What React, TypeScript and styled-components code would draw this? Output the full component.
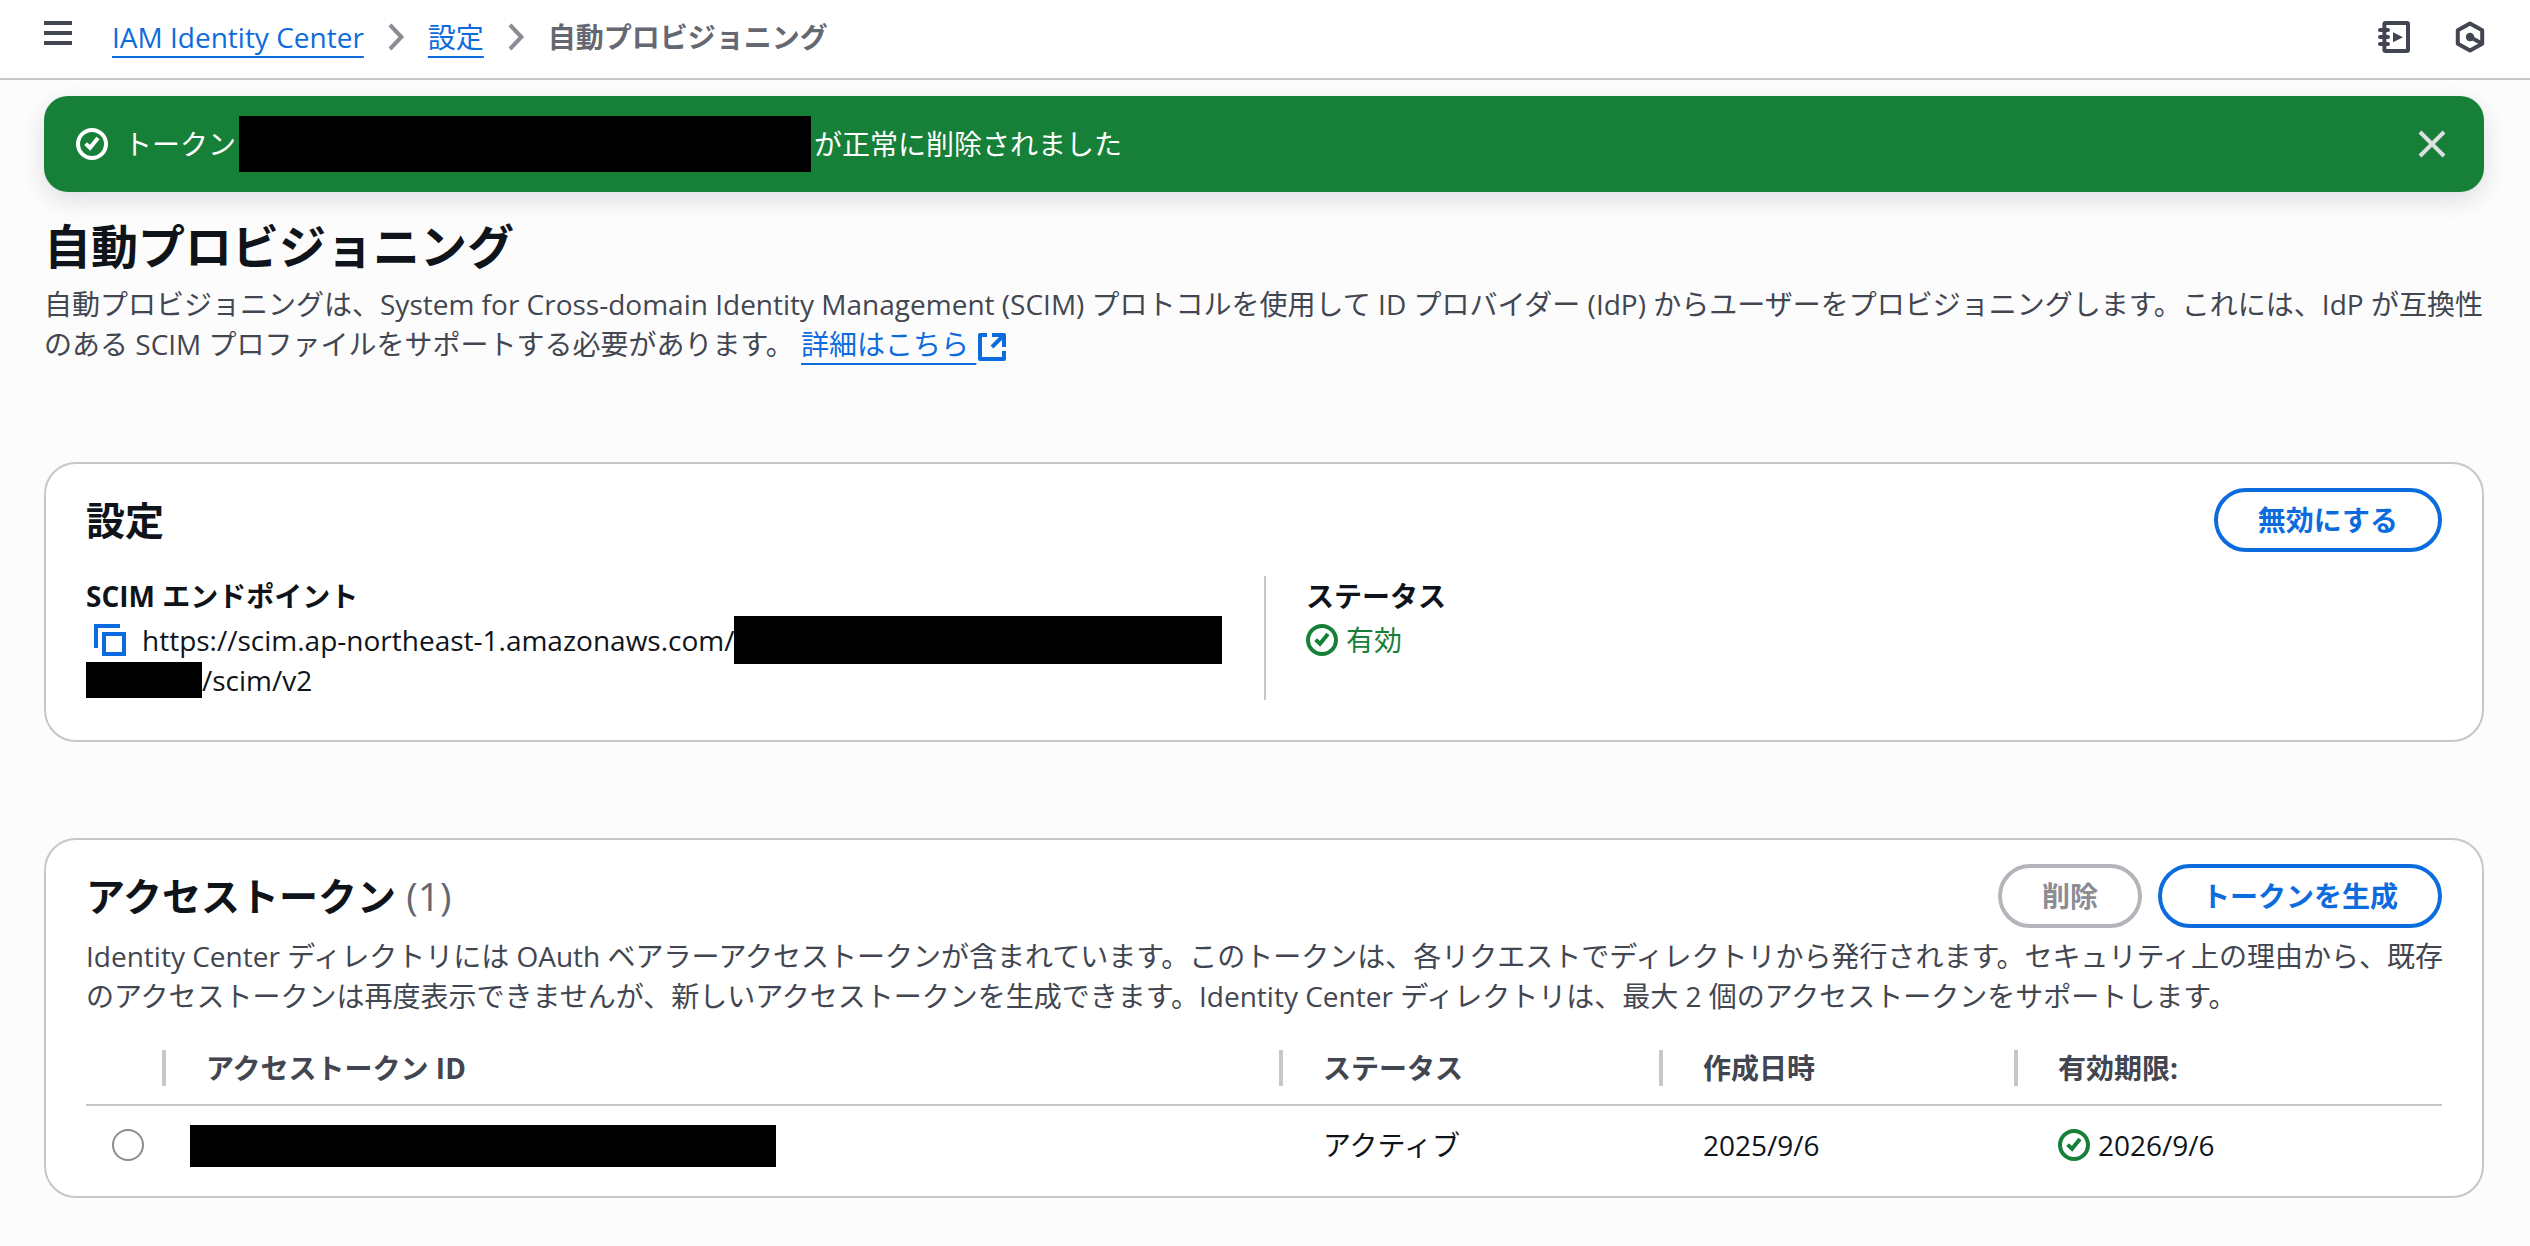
import React from "react";
import styled, { createGlobalStyle, css } from "styled-components";

const color = {
  text: "#0f141a",
  body: "#424650",
  muted: "#656871",
  line: "#c6c6cd",
  link: "#0d6cdd",
  success: "#178038",
  disabled: "#8c8c94",
};

const GlobalStyle = createGlobalStyle`
  *, *::before, *::after { box-sizing: border-box; }
  body {
    margin: 0;
    background: #fcfcfd;
    color: ${color.text};
    font-family: "Open Sans", "Noto Sans CJK JP", sans-serif;
    font-size: 28px;
    line-height: 40px;
  }
  h1, h2, h3, p, dl, dd, dt, ol { margin: 0; padding: 0; }
`;

const Icon = styled.svg`
  width: 32px;
  height: 32px;
  fill: none;
  stroke: currentColor;
  stroke-width: 2;
  flex: none;
`;

const IconButton = styled.button`
  display: flex;
  padding: 0;
  border: 0;
  background: none;
  color: inherit;
  cursor: pointer;
`;

const Link = styled.a`
  color: ${color.link};
  text-decoration: underline;
  text-decoration-thickness: 2px;
  text-underline-offset: 8px;
  text-decoration-skip-ink: none;
`;

const TopBar = styled.header`
  display: flex;
  align-items: center;
  justify-content: space-between;
  height: 80px;
  padding: 0 44px 4px;
  background: #fff;
  border-bottom: 2px solid ${color.line};
  color: ${color.body};
`;

const TopGroup = styled.div<{ $gap: number }>`
  display: flex;
  align-items: center;
  gap: ${(p) => p.$gap}px;
`;

const Crumbs = styled.ol`
  display: flex;
  align-items: center;
  gap: 16px;
  list-style: none;
`;

const Crumb = styled.li<{ $current?: boolean }>`
  display: flex;
  align-items: center;
  gap: 16px;
  font-weight: ${(p) => (p.$current ? 700 : 400)};
  color: ${(p) => (p.$current ? color.muted : color.link)};
`;

const Separator = styled(Icon)`
  color: ${color.disabled};
`;

const Content = styled.main`
  padding: 16px 46px 48px 44px;
`;

const Flash = styled.div`
  display: flex;
  align-items: center;
  gap: 16px;
  min-height: 96px;
  padding: 0 36px 0 32px;
  border-radius: 24px;
  background: ${color.success};
  color: #fff;
  box-shadow: 0 8px 24px rgba(0, 7, 22, 0.12);
`;

const FlashText = styled.div`
  display: flex;
  align-items: center;
  gap: 3px;
  flex: 1;
`;

const CloseButton = styled(IconButton)`
  color: #dedee3;
`;

const Redacted = styled.span<{ $width: number; $height: number; $grow?: boolean }>`
  display: inline-block;
  flex: ${(p) => (p.$grow ? "1 1 0" : "none")};
  width: ${(p) => p.$width}px;
  height: ${(p) => p.$height}px;
  background: #000;
  vertical-align: middle;
`;

const PageHeader = styled.div`
  padding-top: 24px;
  color: ${color.body};
`;

const Title = styled.h1`
  margin-bottom: 8px;
  font-size: 47px;
  line-height: 60px;
  font-weight: 700;
  color: ${color.text};
`;

const ExternalIcon = styled(Icon)`
  width: 28px;
  height: 28px;
  margin-left: 2px;
  vertical-align: -6px;
`;

const Card = styled.section<{ $top: number; $bottom: number }>`
  margin-top: ${(p) => p.$top}px;
  padding: 24px 40px ${(p) => p.$bottom}px;
  border: 2px solid ${color.line};
  border-radius: 32px;
  background: #fff;
`;

const CardHeader = styled.div`
  display: flex;
  align-items: center;
  justify-content: space-between;
`;

const CardTitle = styled.h2`
  font-size: 39px;
  line-height: 48px;
  font-weight: 700;
`;

const Counter = styled.span`
  font-weight: 500;
  color: ${color.muted};
`;

const Actions = styled.div`
  display: flex;
  gap: 16px;
`;

const Button = styled.button`
  height: 64px;
  padding: 0 40px;
  border: 4px solid ${color.link};
  border-radius: 32px;
  background: #fff;
  color: ${color.link};
  font: inherit;
  font-weight: 700;
  cursor: pointer;

  &:disabled {
    border-color: #b4b4bb;
    color: ${color.disabled};
    cursor: default;
  }
`;

const Columns = styled.dl`
  display: grid;
  grid-template-columns: 1fr 1fr;
  margin-top: 24px;
`;

const Column = styled.div<{ $divided?: boolean }>`
  padding-right: 42px;
  ${(p) =>
    p.$divided &&
    css`
      padding-left: 40px;
      border-left: 2px solid ${color.line};
    `}
`;

const Term = styled.dt`
  margin-bottom: 4px;
  font-weight: 700;
`;

const EndpointLine = styled.div`
  display: flex;
  align-items: center;
  height: 40px;
`;

const CopyButton = styled(IconButton)`
  padding: 0 16px 0 8px;
  color: ${color.link};
`;

const Status = styled.span<{ $plain?: boolean }>`
  display: flex;
  align-items: center;
  gap: 8px;
  color: ${(p) => (p.$plain ? color.text : color.success)};

  svg {
    color: ${color.success};
  }
`;

const Description = styled.p`
  margin: 8px -8px 0 0;
  color: ${color.body};
`;

const Table = styled.table`
  width: 100%;
  margin-top: 16px;
  border-collapse: separate;
  border-spacing: 0;
  table-layout: fixed;
`;

const HeadCell = styled.th`
  height: 74px;
  padding: 0;
  border-bottom: 2px solid ${color.line};
  text-align: left;
  color: ${color.body};
`;

const HeadLabel = styled.div<{ $last?: boolean }>`
  display: flex;
  align-items: center;
  height: 36px;
  padding-left: 40px;
  border-right: ${(p) => (p.$last ? "0" : `4px solid ${color.line}`)};
`;

const Cell = styled.td`
  height: 78px;
  padding: 0 0 0 40px;
`;

const SelectCell = styled(Cell)`
  padding-left: 26px;
`;

const WideCell = styled(Cell)`
  padding-left: 24px;
`;

const Radio = styled.input`
  appearance: none;
  display: block;
  width: 32px;
  height: 32px;
  margin: 0;
  border: 2px solid ${color.disabled};
  border-radius: 50%;
  background: #fff;
`;

const Chevron = () => (
  <Separator viewBox="0 0 16 16" aria-hidden="true">
    <path d="m5 2 5.700 6-5.700 6" />
  </Separator>
);

const CheckCircle = () => (
  <Icon viewBox="0 0 16 16" aria-hidden="true">
    <circle cx="8" cy="8" r="7" />
    <path d="m4.800 7.800 2.200 2.100 4-4.900" />
  </Icon>
);

export default function App() {
  return (
    <>
      <GlobalStyle />
      <TopBar>
        <TopGroup $gap={36}>
          <IconButton aria-label="メニュー">
            <Icon viewBox="0 0 16 16">
              <path d="M0 1h14M0 6h14M0 11h14" />
            </Icon>
          </IconButton>
          <nav>
            <Crumbs>
              <Crumb>
                <Link href="#iam">IAM Identity Center</Link>
                <Chevron />
              </Crumb>
              <Crumb>
                <Link href="#settings">設定</Link>
                <Chevron />
              </Crumb>
              <Crumb $current>自動プロビジョニング</Crumb>
            </Crumbs>
          </nav>
        </TopGroup>
        <TopGroup $gap={44}>
          <IconButton aria-label="チュートリアル">
            <Icon viewBox="0 0 16 16">
              <rect x="3.200" y="1" width="11.800" height="14" rx="0.600" />
              <path d="M1 4.500h4M1 8h4M1 11.500h4" strokeLinecap="round" />
              <path d="M7.500 5.600v5l5-2.500z" fill="currentColor" stroke="none" />
            </Icon>
          </IconButton>
          <IconButton aria-label="Amazon Q">
            <Icon viewBox="0 0 16 16">
              <path d="m8 1.200 6.100 3.400v6.800L8 14.800l-6.100-3.400V4.600z" strokeLinejoin="round" />
              <circle cx="8" cy="8" r="2.100" fill="currentColor" stroke="none" />
              <path d="m8 8 6 3.200" />
            </Icon>
          </IconButton>
        </TopGroup>
      </TopBar>
      <Content>
        <Flash role="status">
          <CheckCircle />
          <FlashText>
            <span>トークン</span>
            <Redacted $width={572} $height={56} />
            <span>が正常に削除されました</span>
          </FlashText>
          <CloseButton aria-label="閉じる">
            <Icon viewBox="0 0 16 16">
              <path d="m2 2 12 12M14 2 2 14" />
            </Icon>
          </CloseButton>
        </Flash>

        <PageHeader>
          <Title>自動プロビジョニング</Title>
          <p>
            自動プロビジョニングは、System for Cross-domain Identity Management (SCIM)
            プロトコルを使用して ID プロバイダー (IdP)
            からユーザーをプロビジョニングします。これには、IdP が互換性のある SCIM
            プロファイルをサポートする必要があります。{" "}
            <Link href="#details">
              詳細はこちら{" "}
              <ExternalIcon viewBox="0 0 14 14" aria-hidden="true">
                <path d="M4.500 1H1v12h12V9M7 1h6v6M13 1 7 7" strokeLinejoin="round" />
              </ExternalIcon>
            </Link>
          </p>
        </PageHeader>

        <Card $top={98} $bottom={40}>
          <CardHeader>
            <CardTitle>設定</CardTitle>
            <Button>無効にする</Button>
          </CardHeader>
          <Columns>
            <Column>
              <Term>SCIM エンドポイント</Term>
              <dd>
                <EndpointLine>
                  <CopyButton aria-label="コピー">
                    <Icon viewBox="0 0 16 16">
                      <path d="M1 12V1h12" />
                      <rect x="5" y="5" width="10" height="10" />
                    </Icon>
                  </CopyButton>
                  <span>https://scim.ap-northeast-1.amazonaws.com/</span>
                  <Redacted $width={497} $height={48} $grow />
                </EndpointLine>
                <EndpointLine>
                  <Redacted $width={116} $height={36} />
                  <span>/scim/v2</span>
                </EndpointLine>
              </dd>
            </Column>
            <Column $divided>
              <Term>ステータス</Term>
              <dd>
                <Status>
                  <CheckCircle />
                  有効
                </Status>
              </dd>
            </Column>
          </Columns>
        </Card>

        <Card $top={96} $bottom={12}>
          <CardHeader>
            <CardTitle>
              アクセストークン <Counter>(1)</Counter>
            </CardTitle>
            <Actions>
              <Button disabled>削除</Button>
              <Button>トークンを生成</Button>
            </Actions>
          </CardHeader>
          <Description>
            Identity Center ディレクトリには OAuth
            ベアラーアクセストークンが含まれています。このトークンは、各リクエストでディレクトリから発行されます。セキュリティ上の理由から、既存のアクセストークンは再度表示できませんが、新しいアクセストークンを生成できます。Identity
            Center ディレクトリは、最大 2 個のアクセストークンをサポートします。
          </Description>
          <Table>
            <colgroup>
              <col width="80" />
              <col />
              <col width="380" />
              <col width="355" />
              <col width="424" />
            </colgroup>
            <thead>
              <tr>
                <HeadCell aria-label="選択">
                  <HeadLabel />
                </HeadCell>
                <HeadCell scope="col">
                  <HeadLabel>アクセストークン ID</HeadLabel>
                </HeadCell>
                <HeadCell scope="col">
                  <HeadLabel>ステータス</HeadLabel>
                </HeadCell>
                <HeadCell scope="col">
                  <HeadLabel>作成日時</HeadLabel>
                </HeadCell>
                <HeadCell scope="col">
                  <HeadLabel $last>有効期限:</HeadLabel>
                </HeadCell>
              </tr>
            </thead>
            <tbody>
              <tr>
                <SelectCell>
                  <Radio type="radio" name="token" aria-label="トークンを選択" />
                </SelectCell>
                <WideCell>
                  <Redacted $width={586} $height={42} />
                </WideCell>
                <Cell>アクティブ</Cell>
                <Cell>2025/9/6</Cell>
                <Cell>
                  <Status $plain>
                    <CheckCircle />
                    2026/9/6
                  </Status>
                </Cell>
              </tr>
            </tbody>
          </Table>
        </Card>
      </Content>
    </>
  );
}
